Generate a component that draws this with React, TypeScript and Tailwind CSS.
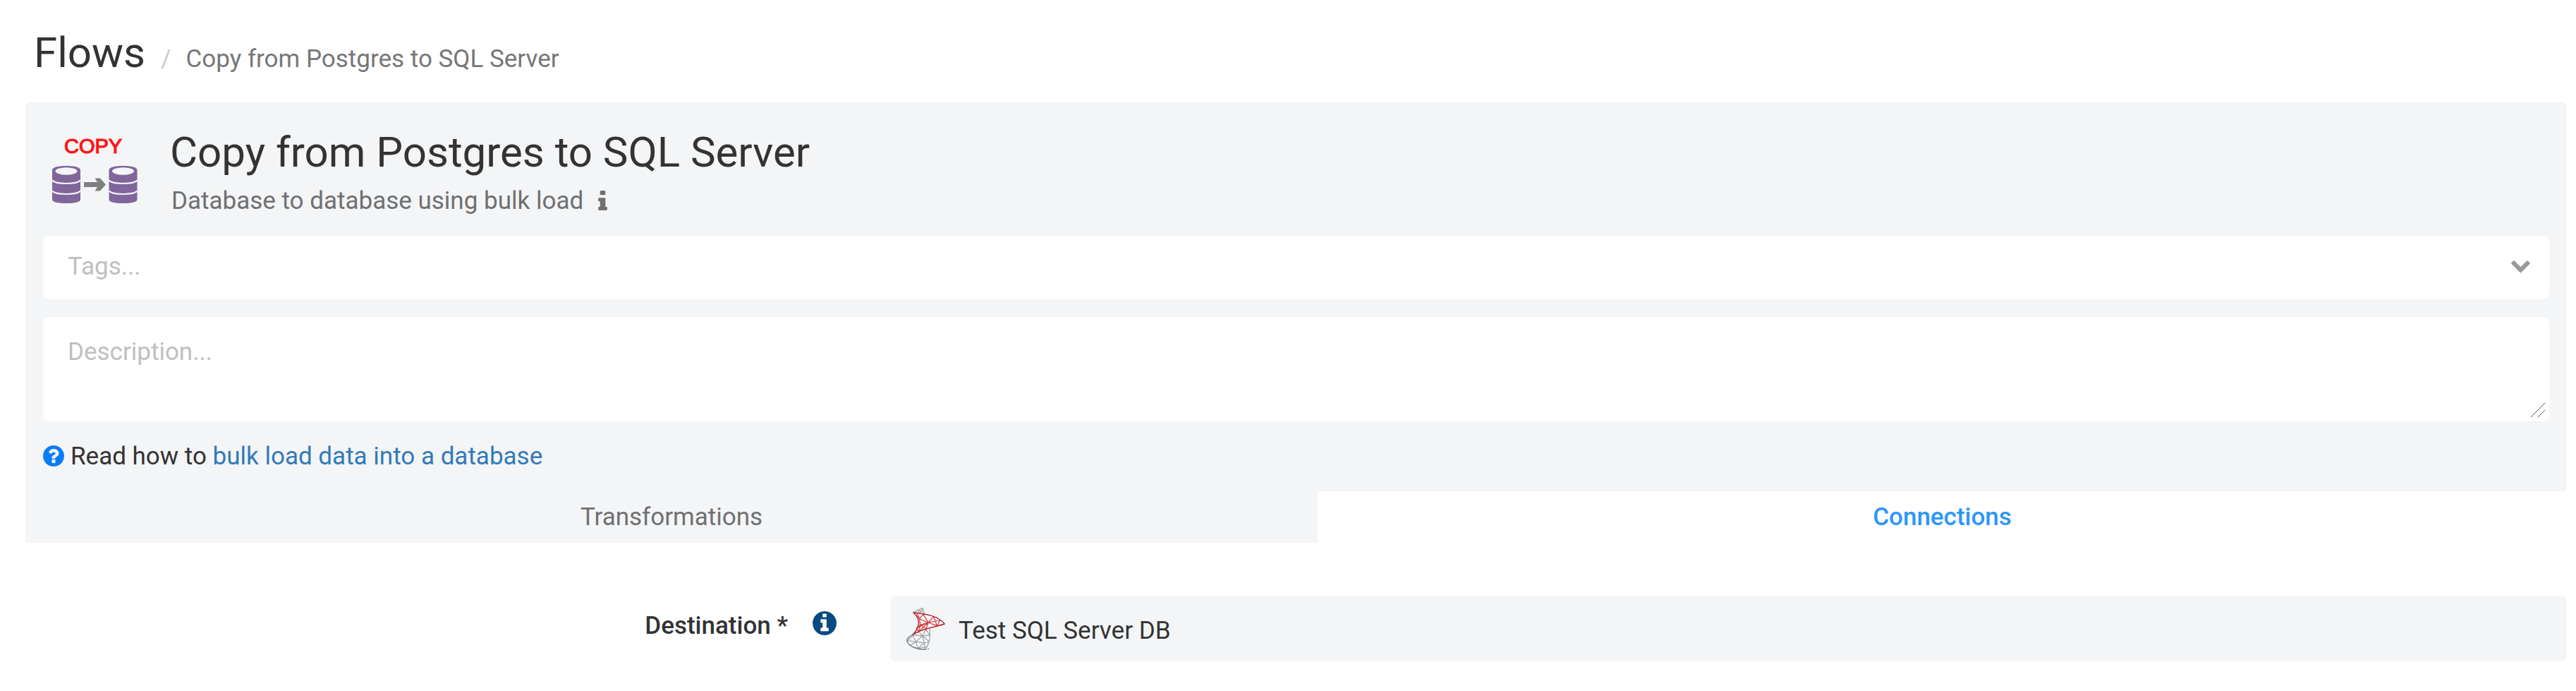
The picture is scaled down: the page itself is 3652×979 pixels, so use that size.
import React, { useState } from 'react';

type Tab = 'transformations' | 'connections';

const CIRCLE = 'zM1664 896q0 209-103 385.5t-279.5 279.5-385.5 103-385.5-103-279.5-279.5-103-385.5 103-385.5 279.5-279.5 385.5-103 385.5 103 279.5 279.5 103 385.5z';

const InfoIcon: React.FC<{ className: string }> = ({ className }) => (
  <svg viewBox="0 128 640 1408" className={className} fill="currentColor">
    <path d="M640 1344v128q0 26-19 45t-45 19h-512q-26 0-45-19t-19-45v-128q0-26 19-45t45-19h64v-384h-64q-26 0-45-19t-19-45v-128q0-26 19-45t45-19h384q26 0 45 19t19 45v576h64q26 0 45 19t19 45zm-128-1152v192q0 26-19 45t-45 19h-256q-26 0-45-19t-19-45v-192q0-26 19-45t45-19h256q26 0 45 19t19 45z" />
  </svg>
);

const InfoCircleIcon: React.FC<{ className: string }> = ({ className }) => (
  <svg viewBox="128 128 1536 1536" className={className} fill="currentColor">
    <path d={`M1152 1376v-160q0-14-9-23t-23-9h-96v-512q0-14-9-23t-23-9h-320q-14 0-23 9t-9 23v160q0 14 9 23t23 9h96v320h-96q-14 0-23 9t-9 23v160q0 14 9 23t23 9h448q14 0 23-9t9-23zm-128-896v-160q0-14-9-23t-23-9h-192q-14 0-23 9t-9 23v160q0 14 9 23t23 9h192q14 0 23-9t9-23${CIRCLE}`} />
  </svg>
);

const QuestionCircleIcon: React.FC<{ className: string }> = ({ className }) => (
  <svg viewBox="128 128 1536 1536" className={className} fill="currentColor">
    <path d={`M1024 1376v-192q0-14-9-23t-23-9h-192q-14 0-23 9t-9 23v192q0 14 9 23t23 9h192q14 0 23-9t9-23zm256-672q0-88-55.5-163t-138.5-116-170-41q-243 0-371 213-15 24 8 42l132 100q7 6 19 6 16 0 25-12 53-68 86-92 34-24 86-24 48 0 85.5 26t37.5 59q0 38-20 61t-68 45q-63 28-115.5 86.5t-52.5 125.5v36q0 14 9 23t23 9h192q14 0 23-9t9-23q0-19 21.5-49.5t54.5-49.5q32-18 49-28.5t46-35 44.5-48 28-60.5 12.5-81${CIRCLE}`} />
  </svg>
);

const Cylinder: React.FC<{ x: number }> = ({ x }) => (
  <g transform={`translate(${x} 41)`}>
    <path d="M0 6C0 2 8 0 20 0s20 2 20 6v42c0 3-8 5-20 5S0 51 0 48z" fill="#80669b" />
    <ellipse cx="20" cy="7.5" rx="15.5" ry="5.2" fill="#f3f5f7" />
    <path d="M0 20.5C5 26.5 35 26.5 40 20.5M0 35.5C5 41.5 35 41.5 40 35.5" fill="none" stroke="#f3f5f7" strokeWidth="2.2" />
  </g>
);

const CopyFlowIcon: React.FC = () => (
  <svg width="120" height="106" viewBox="0 -10 120 106" className="shrink-0 overflow-visible">
    <text x="17" y="23" textLength="82" fontSize="29" fill="#ff1414" stroke="#ff1414" strokeWidth="1.2" className="font-['Liberation_Sans',sans-serif]">COPY</text>
    <Cylinder x={0} />
    <Cylinder x={80.5} />
    <path d="M45 64h19l-3.500-5.500h7.500l8 9-8 9h-7.500l3.500-5.500h-19z" fill="#808080" />
  </svg>
);

const SqlServerIcon: React.FC = () => (
  <svg width="55" height="62" viewBox="77 63 165 186" className="shrink-0" fill="none" strokeLinecap="round" strokeLinejoin="round">
    <g stroke="#a6a8aa" strokeWidth="3.800">
      <path d="M108 84L146 67M108 84L150 94M146 67L154 95M146 67L133 91M126 77L133 91M126 77L152 85" />
      <path d="M176 157C181 190 172 222 158 244M160 160L178 183L145 186L160 160M145 186L130 168L112 178L103 182L145 186L174 211L153 216L145 186L118 211L103 182M118 211L82 206L112 178M118 211L153 216L125 239L118 211L92 226M153 216L158 244M125 239L164 232M174 211L158 244" />
    </g>
    <path d="M103 181C85 190 77 200 80 209C86 230 122 243 158 244" stroke="#7c7f82" strokeWidth="4.500" />
    <path d="M168 241h4" stroke="#777" strokeWidth="3" />
    <g stroke="#d8383a" strokeWidth="3.500">
      <path d="M107 87L133 113L149 94L170 129L133 113L136 139L170 129L193 104L170 129L161 156L136 139L120 152L170 129M193 104L207 143L239 135M170 129L220 120L207 143L170 129M136 139L130 168M120 152L130 168L170 129M122 90L133 113" />
    </g>
    <path d="M107 87C150 91 212 98 239 135C207 147 130 158 104 181C130 154 143 118 107 87Z" stroke="#b02f34" strokeWidth="4.500" />
  </svg>
);

const App: React.FC = () => {
  const [tab, setTab] = useState<Tab>('connections');
  const [description, setDescription] = useState('');

  const tabClass = (name: Tab) =>
    tab === name ? 'bg-white font-medium text-[#2c96f7]' : 'text-[#707070]';

  return (
    <div className="min-h-screen overflow-hidden bg-white pl-9 pr-[13px] font-[Roboto,sans-serif] text-[35px] leading-[50px] text-[#333]">
      {/* Breadcrumb */}
      <nav className="flex h-[145px] items-baseline pl-3 pt-[39px]">
        <h1 className="text-[60px] leading-[72px]">Flows</h1>
        <span className="ml-[22px] text-[#ccc]">/</span>
        <span className="ml-[21px] text-[#777]">Copy from Postgres to SQL Server</span>
      </nav>

      {/* Flow header */}
      <section className="h-[624px] rounded-t-[8px] bg-[#f3f5f7]">
        <div className="flex h-[189px] pl-[38px] pt-[39px]">
          <CopyFlowIcon />
          <div className="ml-[47px] -mt-[3px]">
            <h2 className="text-[60px] leading-[70px]">Copy from Postgres to SQL Server</h2>
            <div className="mt-[9px] flex items-center pl-[2px] leading-[50px] text-[#707070]">
              Database to database using bulk load
              <InfoIcon className="ml-[21px] mt-[-3px] h-7 w-[13px]" />
            </div>
          </div>
        </div>

        <div className="px-[25px]">
          <div className="flex h-[90px] items-center justify-between rounded-[9px] bg-white pl-[35px] pr-[27px]">
            <span className="-mt-[2px] text-[#bfbfbf]">Tags...</span>
            <svg width="27" height="18" viewBox="0 0 27 18" className="-mt-[2px]" fill="#999">
              <path d="M3.300.4Q4 0 4.700.6L13.500 9.300 22.300.6Q23 0 23.700.4L26.600 3.300Q27.200 4 26.600 4.700L14.200 17.300Q13.500 18 12.800 17.300L.4 4.700Q-.2 4 .4 3.300z" />
            </svg>
          </div>
          <div className="relative mt-[25px] h-[148px]">
            <textarea
              value={description}
              onChange={e => setDescription(e.target.value)}
              placeholder="Description..."
              className="block h-full w-full resize-none rounded-[8px] bg-white px-[35px] pt-[25px] leading-[50px] outline-none placeholder:text-[#bfbfbf]"
            />
            <svg width="20" height="20" viewBox="0 0 20 20" className="absolute bottom-[6px] right-[6px]" stroke="#555" strokeWidth="1">
              <path d="M0 20L20 0M10 20L20 10" />
            </svg>
          </div>
          <p className="mt-[24px] flex h-[50px] items-center">
            <QuestionCircleIcon className="mr-[9px] size-[30px] text-[#067df7]" />
            <span className="mt-[2px] whitespace-pre">Read how to <a href="#" className="text-[#337ab7]">bulk load data into a database</a></span>
          </p>
        </div>

        <div className="mt-[25px] flex h-[73px]">
          <button onClick={() => setTab('transformations')} className={`w-[1832px] ${tabClass('transformations')}`}>
            Transformations
          </button>
          <button onClick={() => setTab('connections')} className={`flex-1 ${tabClass('connections')}`}>
            Connections
          </button>
        </div>
      </section>

      {/* Destination connection */}
      <div className="mt-[75px] flex h-[93px]">
        <div className="flex w-[1226px] justify-end pr-[76px] pt-[15px]">
          <label className="mt-[3px] font-medium">Destination *</label>
          <InfoCircleIcon className="ml-[35px] mt-[7px] size-[34px] text-[#084a80]" />
        </div>
        <div className="flex flex-1 items-center rounded-[8px] bg-[#f3f5f7] pl-[23px]">
          <SqlServerIcon />
          <span className="ml-[19px] mt-[6px]">Test SQL Server DB</span>
        </div>
      </div>
    </div>
  );
};

export default App;
